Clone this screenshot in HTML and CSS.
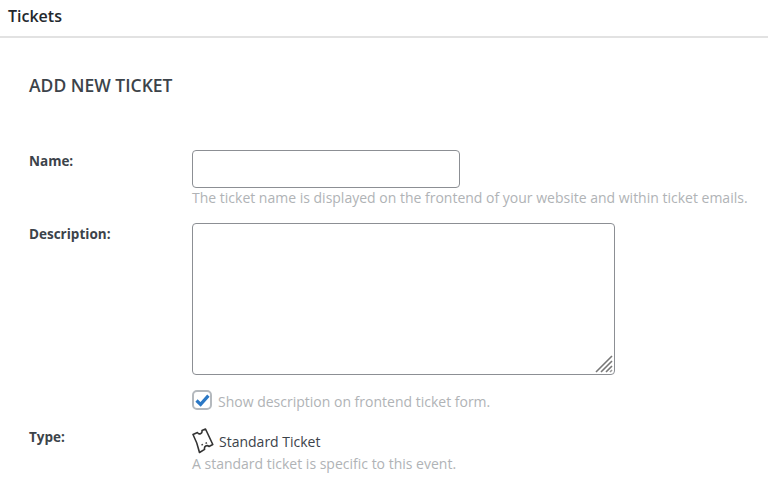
FILE: index.html
```html
<!DOCTYPE html>
<html lang="en">
<head>
    <meta charset="UTF-8">
    <meta name="viewport" content="width=device-width, initial-scale=1.0">
    <title>Tickets</title>
    <link rel="stylesheet" href="styles.css">
</head>
<body>
    <div class="panel-header">Tickets</div>
    <div class="panel-body">
        <h2 class="section-title">ADD NEW TICKET</h2>

        <div class="form-row row-name">
            <label class="form-label">Name:</label>
            <div class="form-field">
                <input type="text" class="input-name">
                <p class="hint">The ticket name is displayed on the frontend of your website and within ticket emails.</p>
            </div>
        </div>

        <div class="form-row row-description">
            <label class="form-label">Description:</label>
            <div class="form-field">
                <div class="textarea-box">
                    <svg class="resize-grip" width="20" height="20" viewBox="0 0 20 20">
                        <path d="M2 18 L18 2 M7 18 L18 7 M12 18 L18 12" stroke="#777" stroke-width="1.6" fill="none"/>
                        <path d="M16 18 L18 16" stroke="#999" stroke-width="1.6" fill="none"/>
                    </svg>
                </div>
                <div class="check-line">
                    <span class="checkbox">
                        <svg width="15" height="13" viewBox="0 0 15 13">
                            <path d="M1.5 6.5 L5.6 10.4 L13.4 1.6" stroke="#2b78c5" stroke-width="3.2" fill="none"/>
                        </svg>
                    </span>
                    <span class="check-text">Show description on frontend ticket form.</span>
                </div>
            </div>
        </div>

        <div class="form-row row-type">
            <label class="form-label">Type:</label>
            <div class="form-field">
                <div class="type-line">
                    <svg class="ticket-icon" width="22" height="26" viewBox="0 0 22 26">
                        <path d="M1 6.5 L5.5 4.5 Q6.5 6.5 8.5 5.7 Q10.5 4.8 10 2.6 L13.5 1 L20.8 16.5 L17 18.5 Q15.5 17 13.7 18 Q12 19 12.6 21.4 L7.5 24.5 Q5.5 15 1 6.5 Z" stroke="#333" stroke-width="1.6" stroke-linejoin="round" fill="#fff"/>
                        <path d="M9.5 17 L11 16.4 M13.5 15.4 L15 14.8" stroke="#444" stroke-width="1.5" fill="none"/>
                    </svg>
                    <span class="type-name">Standard Ticket</span>
                </div>
                <p class="hint">A standard ticket is specific to this event.</p>
            </div>
        </div>
    </div>
</body>
</html>
```

FILE: styles.css
```css
* {
    margin: 0;
    padding: 0;
    box-sizing: border-box;
}

body {
    font-family: "Open Sans", "Noto Sans", sans-serif;
    font-size: 14px;
    color: #3c434a;
    background-color: #fff;
    overflow: hidden;
}

.panel-header {
    height: 38px;
    padding: 6px 8px 0;
    font-size: 16px;
    font-weight: 600;
    line-height: 20px;
    color: #23282d;
    border-bottom: 2px solid #e2e2e2;
}

.panel-body {
    padding: 36px 29px 0;
}

.section-title {
    font-size: 17.5px;
    font-weight: 600;
    line-height: 22px;
    color: #3c434a;
}

.form-row {
    display: flex;
}

.row-name {
    margin-top: 54px;
}

.row-description {
    margin-top: 15px;
}

.row-type {
    margin-top: 15px;
}

.form-label {
    width: 163px;
    flex-shrink: 0;
    font-size: 13.5px;
    font-weight: 700;
    line-height: 22px;
    color: #3c434a;
}

.input-name {
    display: block;
    width: 268px;
    height: 38px;
    background: #fff;
    border: 1px solid #8c8f94;
    border-radius: 4px;
}

.hint {
    font-size: 14px;
    line-height: 20px;
    color: #b0b3b6;
    white-space: nowrap;
}

.textarea-box {
    position: relative;
    width: 423px;
    height: 152px;
    border: 1px solid #8c8f94;
    border-radius: 4px;
}

.resize-grip {
    position: absolute;
    right: 0;
    bottom: 0;
}

.check-line {
    display: flex;
    align-items: center;
    margin-top: 14px;
    height: 22px;
}

.checkbox {
    display: flex;
    align-items: center;
    justify-content: center;
    width: 20px;
    height: 20px;
    margin-right: 6px;
    border: 2px solid #b4b9be;
    border-radius: 5px;
}

.check-text {
    padding-top: 2px;
    font-size: 14px;
    color: #b0b3b6;
}

.type-line {
    display: flex;
    align-items: center;
    height: 26px;
    margin-top: 2px;
}

.ticket-icon {
    margin-right: 5px;
}

.type-name {
    font-size: 14px;
    color: #3c434a;
}
```
